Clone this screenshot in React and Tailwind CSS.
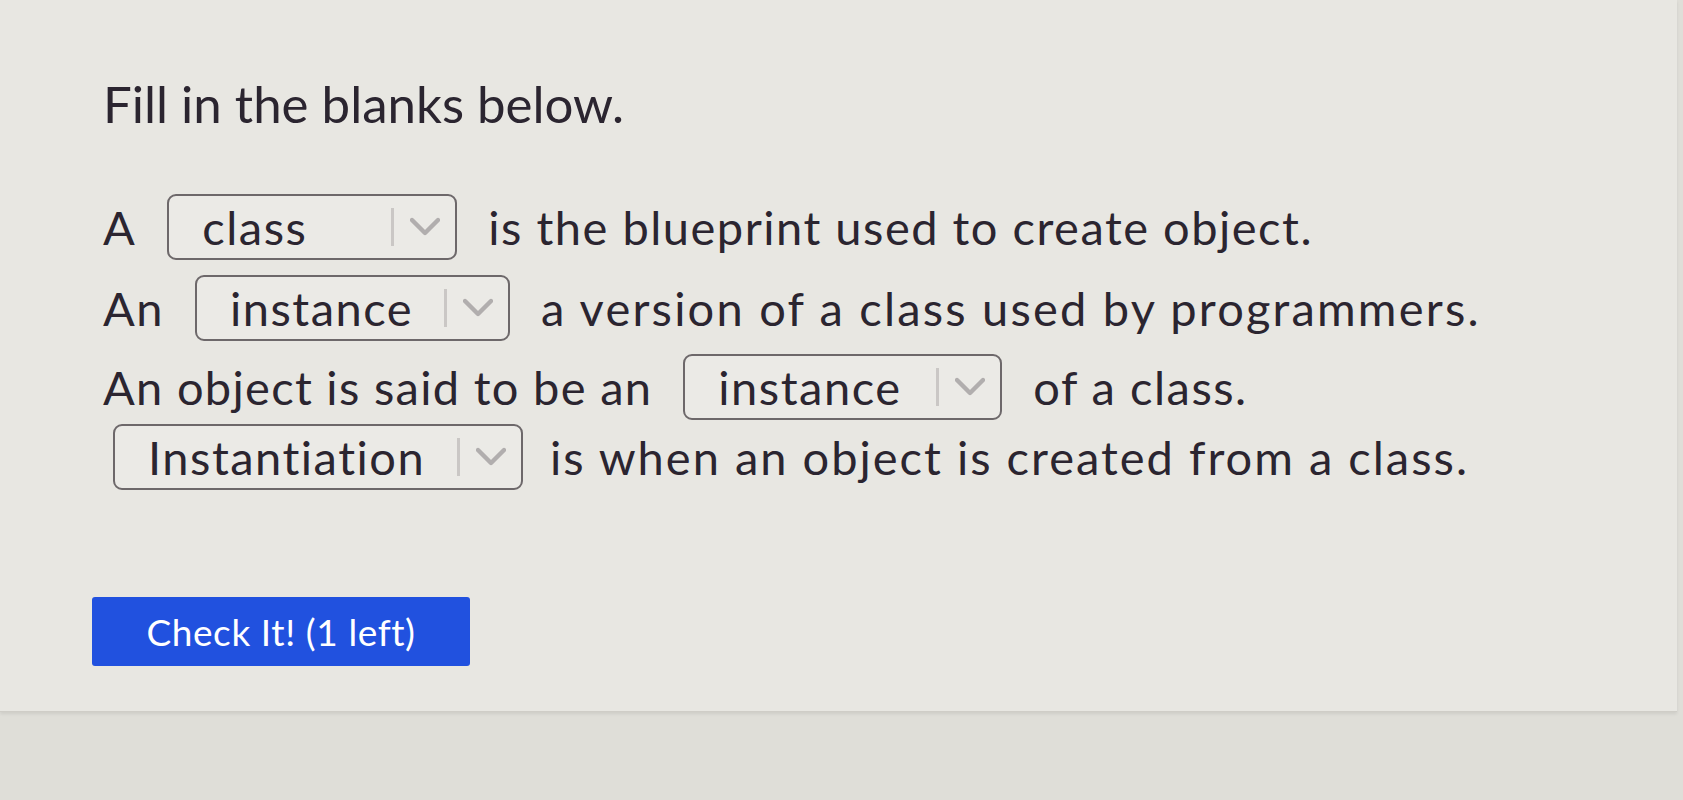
function Chevron() {
  return (
    <svg width="30" height="22" viewBox="0 0 30 22" className="ml-[16px] shrink-0">
      <polyline
        points="2,4 15,17 28,4"
        fill="none"
        stroke="#b1aeae"
        strokeWidth="4.4"
        strokeLinecap="round"
        strokeLinejoin="round"
      />
    </svg>
  )
}

function Blank({ value, width }) {
  return (
    <span
      className="flex h-[66px] shrink-0 items-center rounded-[9px] border-[2.5px] border-[#6d686a] bg-[#ebeae6] pl-[33px] pr-[15px] tracking-[1.5px]"
      style={{ width }}
    >
      <span className="flex-1 whitespace-nowrap">{value}</span>
      <span className="h-[38px] w-[3px] bg-[#cac7c5]" />
      <Chevron />
    </span>
  )
}

export default function App() {
  return (
    <div className="min-h-[800px] bg-[#dfded8] font-['Lato',sans-serif] text-[#2b2530] [font-variant-ligatures:none]">
      <div className="h-[712px] w-[1677px] border-b border-[#cfcdc7] bg-[#e8e7e2] pl-[103px] pt-[72px] shadow-[0_2px_3px_rgba(0,0,0,0.08)]">
        <h1 className="text-[51px] leading-[64px]">Fill in the blanks below.</h1>

        <div className="mt-[58px] flex flex-col text-[47px] leading-none tracking-[1.5px]">
          <div className="flex items-center gap-[31px]">
            <span>A</span>
            <Blank value="class" width={290} />
            <span>is the blueprint used to create object.</span>
          </div>
          <div className="mt-[15px] flex items-center gap-[31px]">
            <span>An</span>
            <Blank value="instance" width={315} />
            <span className="tracking-[2.2px]">a version of a class used by programmers.</span>
          </div>
          <div className="mt-[13px] flex items-center gap-[31px]">
            <span className="tracking-[1.3px]">An object is said to be an</span>
            <Blank value="instance" width={319} />
            <span>of a class.</span>
          </div>
          <div className="mt-[4px] flex items-center gap-[27px] pl-[10px]">
            <Blank value="Instantiation" width={410} />
            <span className="tracking-[2px]">is when an object is created from a class.</span>
          </div>
        </div>

        <button className="-ml-[11px] mt-[107px] flex h-[69px] w-[378px] items-center justify-center rounded-[3px] bg-[#2151df] text-[37px] tracking-[0.6px] text-white">
          Check It! (1 left)
        </button>
      </div>
    </div>
  )
}
